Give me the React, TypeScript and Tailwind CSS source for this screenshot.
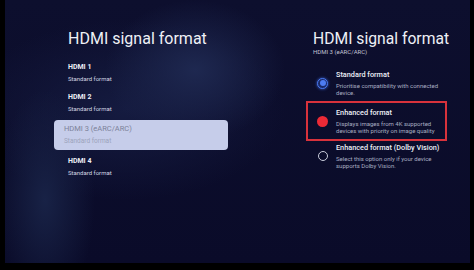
import React from "react";

const inputs = [
  { name: "HDMI 1", format: "Standard format" },
  { name: "HDMI 2", format: "Standard format" },
  { name: "HDMI 3 (eARC/ARC)", format: "Standard format", focused: true },
  { name: "HDMI 4", format: "Standard format" },
];

function InputRow({ name, format, focused }: { name: string; format: string; focused?: boolean }) {
  if (focused) {
    return (
      <div className="h-[30px] w-[174px] rounded-[4px] bg-[#c6cdea] pl-[10px] pt-[4px] mb-[4px] flex flex-col gap-[2px]">
        <span className="text-[7.5px] leading-[10px] text-[#7c8299]">{name}</span>
        <span className="text-[6.5px] leading-[10px] text-[#9ca3bb]">{format}</span>
      </div>
    );
  }
  return (
    <div className="h-[30px] pl-[14px] pt-[2px] flex flex-col gap-[2px]">
      <span className="text-[7px] leading-[10px] font-bold text-[#eceef6]">{name}</span>
      <span className="text-[6px] leading-[10px] text-[#d4d7e4]">{format}</span>
    </div>
  );
}

function Radio({ kind }: { kind: "on" | "focus" | "off" }) {
  if (kind === "on")
    return (
      <div className="w-[11px] h-[11px] rounded-full border-[1.5px] border-[#4a78ee] bg-[#1a2a6a] flex items-center justify-center shadow-[0_0_3px_#3c64d8]">
        <div className="w-[6px] h-[6px] rounded-full bg-[#4d7cf2]" />
      </div>
    );
  if (kind === "focus") return <div className="w-[11px] h-[11px] rounded-full bg-[#ec2a36]" />;
  return <div className="w-[10px] h-[10px] rounded-full border-[1.5px] border-[#c9ccdb]" />;
}

function OptionRow({
  title,
  lines,
  kind,
  className,
}: {
  title: string;
  lines: string[];
  kind: "on" | "focus" | "off";
  className: string;
}) {
  return (
    <div className={`w-[141px] border-2 flex items-center pl-[9px] ${className}`}>
      <div className="w-[11px] flex justify-center shrink-0">
        <Radio kind={kind} />
      </div>
      <div className="ml-[8px] flex flex-col">
        <span className="text-[7.3px] leading-[9px] font-medium text-[#eef0f7] whitespace-nowrap">{title}</span>
        <div className="mt-[3px] flex flex-col">
          {lines.map((l) => (
            <span key={l} className="text-[6px] leading-[7px] text-[#a9adc2] whitespace-nowrap">
              {l}
            </span>
          ))}
        </div>
      </div>
    </div>
  );
}

export default function App() {
  return (
    <div className="w-[474px] h-[270px] bg-black overflow-hidden font-['Roboto',sans-serif]">
      <div className="ml-[5px] w-[465px] h-[263px] flex bg-[#0b0c2b] bg-[radial-gradient(ellipse_90px_70px_at_190px_70px,#1e2850_0%,transparent_100%),radial-gradient(ellipse_50px_110px_at_40px_200px,#182246_0%,transparent_100%),radial-gradient(ellipse_160px_90px_at_120px_110px,#151b40_0%,transparent_100%),linear-gradient(180deg,#0d0f2e_0%,#0a0b29_100%)]">
        {/* Left: input list */}
        <div className="w-[262px] pl-[49px] pt-[29px] flex flex-col">
          <h1 className="pl-[14px] text-[16px] leading-[20px] text-[#eef0f6] whitespace-nowrap">HDMI signal format</h1>
          <div className="mt-[11px] flex flex-col">
            {inputs.map((i) => (
              <InputRow key={i.name} {...i} />
            ))}
          </div>
        </div>

        {/* Right: format options */}
        <div className="flex-1 pt-[29px] pl-[39px] flex flex-col">
          <h2 className="pl-[7px] text-[15.7px] leading-[19px] text-[#eef0f6] whitespace-nowrap">HDMI signal format</h2>
          <span className="pl-[7px] text-[6px] leading-[8px] text-[#c0c3d4]">HDMI 3 (eARC/ARC)</span>
          <div className="mt-[9px] flex flex-col">
            <OptionRow
              kind="on"
              title="Standard format"
              lines={["Prioritise compatibility with connected", "device."]}
              className="border-transparent h-[36px]"
            />
            <OptionRow
              kind="focus"
              title="Enhanced format"
              lines={["Displays images from 4K supported", "devices with priority on image quality"]}
              className="border-[#d8323c] h-[40px]"
            />
            <OptionRow
              kind="off"
              title="Enhanced format (Dolby Vision)"
              lines={["Select this option only if your device", "supports Dolby Vision."]}
              className="border-transparent h-[32px] -mt-[1px]"
            />
          </div>
        </div>
      </div>
    </div>
  );
}
